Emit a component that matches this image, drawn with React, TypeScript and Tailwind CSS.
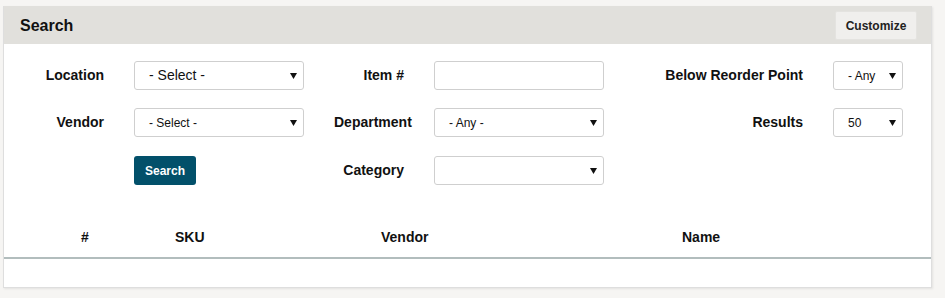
import React from "react";

const Caret = () => (
  <svg width="7" height="6" viewBox="0 0 7 6" className="shrink-0">
    <polygon points="0,0 7,0 3.5,6" fill="#111" />
  </svg>
);

const Select = ({ value = "", size = "text-[12px]", clip = false }: { value?: string; size?: string; clip?: boolean }) => (
  <div className="h-[29px] w-full border border-[#cfcfcf] rounded-[3px] bg-white flex items-center justify-between pl-[14px] pr-[6px]">
    <span className={`${size} text-[#111] whitespace-nowrap ${clip ? "overflow-hidden w-[28px]" : ""}`}>{value}</span>
    <Caret />
  </div>
);

const Label = ({ children }: { children?: React.ReactNode }) => (
  <div className="text-[14px] font-bold text-[#111] whitespace-nowrap text-right">{children}</div>
);

const App = () => (
  <div className="min-h-[298px] w-[945px] bg-[#f6f5f3] pt-[6px] pl-[3px]" style={{ fontFamily: '"Liberation Sans", Arial, sans-serif' }}>
    <div className="w-[929px] bg-white border-x border-b border-[#dedede] shadow-[1px_1px_2px_rgba(0,0,0,0.08)]">
      {/* Header */}
      <div className="h-[38px] bg-[#e1e0dc] flex items-center justify-between pl-[16px] pr-[14px] pt-[1px]">
        <h2 className="text-[16px] font-bold text-[#111]">Search</h2>
        <button className="h-[29px] w-[82px] bg-[#f0efed] border border-[#e4e3e0] rounded-[2px] text-[12px] font-bold text-[#222]">Customize</button>
      </div>

      {/* Form */}
      <div className="pt-[17px] pl-[30px] grid grid-cols-[70px_170px_70px_170px_169px_70px] gap-x-[30px] gap-y-[18px] items-center">
        <Label>Location</Label>
        <Select value="- Select -" size="text-[14px]" />
        <Label>Item #</Label>
        <div className="h-[29px] border border-[#cfcfcf] rounded-[3px] bg-white" />
        <Label>Below Reorder Point</Label>
        <Select value="- Any -" clip />

        <Label>Vendor</Label>
        <Select value="- Select -" />
        <div className="w-[70px] overflow-visible">
          <div className="text-[14px] font-bold text-[#111] whitespace-nowrap">Department</div>
        </div>
        <Select value="- Any -" />
        <Label>Results</Label>
        <Select value="50" />

        <div />
        <div className="pt-[1px]">
          <button className="h-[29px] w-[62px] bg-[#02506a] rounded-[3px] text-white text-[12px] font-bold">Search</button>
        </div>
        <Label>Category</Label>
        <div className="pt-[1px]">
          <Select />
        </div>
        <div />
        <div />
      </div>

      {/* Table */}
      <div className="mt-[33px] h-[41px] border-b-2 border-[#b2bdbd] flex items-center pl-[77px] text-[14px] font-bold text-[#111]">
        <div className="w-[94px]">#</div>
        <div className="w-[206px]">SKU</div>
        <div className="w-[301px]">Vendor</div>
        <div>Name</div>
      </div>
      <div className="h-[28px]" />
    </div>
  </div>
);

export default App;
